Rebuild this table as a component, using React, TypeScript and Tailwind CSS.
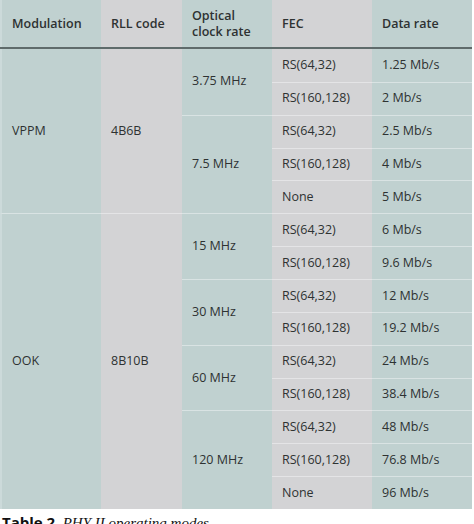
const teal = 'bg-[#c0d1d0]'
const gray = 'bg-[#d3d3d5]'

type Rate = { fec: string; rate: string }
type Clock = { clock: string; rows: Rate[] }
type Group = { mod: string; rll: string; clocks: Clock[] }

const groups: Group[] = [
  {
    mod: 'VPPM',
    rll: '4B6B',
    clocks: [
      { clock: '3.75 MHz', rows: [{ fec: 'RS(64,32)', rate: '1.25 Mb/s' }, { fec: 'RS(160,128)', rate: '2 Mb/s' }] },
      {
        clock: '7.5 MHz',
        rows: [
          { fec: 'RS(64,32)', rate: '2.5 Mb/s' },
          { fec: 'RS(160,128)', rate: '4 Mb/s' },
          { fec: 'None', rate: '5 Mb/s' },
        ],
      },
    ],
  },
  {
    mod: 'OOK',
    rll: '8B10B',
    clocks: [
      { clock: '15 MHz', rows: [{ fec: 'RS(64,32)', rate: '6 Mb/s' }, { fec: 'RS(160,128)', rate: '9.6 Mb/s' }] },
      { clock: '30 MHz', rows: [{ fec: 'RS(64,32)', rate: '12 Mb/s' }, { fec: 'RS(160,128)', rate: '19.2 Mb/s' }] },
      { clock: '60 MHz', rows: [{ fec: 'RS(64,32)', rate: '24 Mb/s' }, { fec: 'RS(160,128)', rate: '38.4 Mb/s' }] },
      {
        clock: '120 MHz',
        rows: [
          { fec: 'RS(64,32)', rate: '48 Mb/s' },
          { fec: 'RS(160,128)', rate: '76.8 Mb/s' },
          { fec: 'None', rate: '96 Mb/s' },
        ],
      },
    ],
  },
]

const cols = 'grid grid-cols-[101px_81px_90px_100px_100px]'
const line = ' border-t border-white/40'

export default function App() {
  const cells: React.ReactNode[] = []
  let row = 1
  groups.forEach((g, gi) => {
    const n = g.clocks.reduce((s, c) => s + c.rows.length, 0)
    const top = gi > 0 ? line : ''
    cells.push(
      <div
        key={g.mod}
        style={{ gridRow: `${row} / span ${n}` }}
        className={'flex items-center pl-[10px] col-start-1 border-l-2 border-l-[#ccdada] ' + teal + top}
      >
        {g.mod}
      </div>,
      <div key={g.rll} style={{ gridRow: `${row} / span ${n}` }} className={'flex items-center pl-[10px] col-start-2 ' + gray + top}>
        {g.rll}
      </div>
    )
    g.clocks.forEach((c, ci) => {
      const ctop = gi > 0 || ci > 0 ? line : ''
      cells.push(
        <div
          key={g.mod + c.clock}
          style={{ gridRow: `${row} / span ${c.rows.length}` }}
          className={'flex items-center pl-[10px] col-start-3 ' + teal + ctop}
        >
          {c.clock}
        </div>
      )
      c.rows.forEach((r, ri) => {
        const rtop = gi > 0 || ci > 0 || ri > 0 ? line : ''
        cells.push(
          <div key={g.mod + c.clock + r.fec} style={{ gridRow: `${row + ri}` }} className={'flex items-center pl-[10px] col-start-4 ' + gray + rtop}>
            {r.fec}
          </div>,
          <div key={g.mod + c.clock + r.rate} style={{ gridRow: `${row + ri}` }} className={'flex items-center pl-[10px] col-start-5 ' + teal + rtop}>
            {r.rate}
          </div>
        )
      })
      row += c.rows.length
    })
  })

  return (
    <div className="w-[474px] bg-white font-['Open_Sans',sans-serif] text-[12.5px] text-[#2e3232]">
      <div className="w-[472px]">
        {/* header */}
        <div className={cols + ' h-[47px] font-semibold leading-[16px]'}>
          <div className={'flex items-center pl-[10px] border-l-2 border-l-[#ccdada] ' + teal}>Modulation</div>
          <div className={'flex items-center pl-[10px] ' + gray}>RLL code</div>
          <div className={'flex items-center pl-[10px] ' + teal}>
            <div>
              <div>Optical</div>
              <div>clock rate</div>
            </div>
          </div>
          <div className={'flex items-center pl-[10px] ' + gray}>FEC</div>
          <div className={'flex items-center pl-[10px] ' + teal}>Data rate</div>
        </div>
        <div className="h-[2px] bg-[#5f6b6b]" />
        {/* body */}
        <div className={cols + ' grid-rows-[repeat(14,minmax(0,1fr))] h-[460px]'}>{cells}</div>
      </div>
      <div className="mt-[3px] pl-[2px] leading-[20px] whitespace-nowrap text-[#111]">
        <span className="font-bold text-[15px]">Table 2.</span>{' '}
        <span className="font-['Liberation_Serif',serif] italic text-[15px]">PHY II operating modes</span>
      </div>
    </div>
  )
}
